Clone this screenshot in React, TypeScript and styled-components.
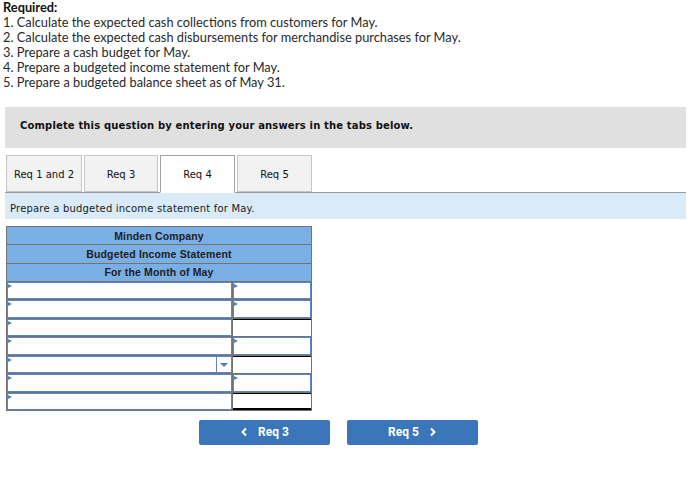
import React from 'react';
import styled, { createGlobalStyle } from 'styled-components';

const GlobalStyle = createGlobalStyle`
  html, body {
    margin: 0;
    padding: 0;
    background: #fff;
  }
  * {
    box-sizing: border-box;
  }
`;

const Page = styled.div`
  width: 696px;
  height: 480px;
  overflow: hidden;
  background: #fff;
`;

const Required = styled.div`
  padding: 0 0 0 3px;
  font-family: Lato, 'Liberation Sans', sans-serif;
  font-size: 12.8px;
  line-height: 15px;
  color: #2a2a2a;

  strong {
    font-weight: 700;
    color: #111;
  }
`;

const Content = styled.div`
  margin: 17px 10px 0 5px;
`;

const Notice = styled.div`
  height: 41px;
  background: #e0e0e0;
  display: flex;
  align-items: center;
  padding: 0 0 4px 15px;
  font-family: 'DejaVu Sans', Verdana, sans-serif;
  font-weight: 700;
  font-size: 10px;
  letter-spacing: 0.15px;
  color: #111;
`;

const TabRow = styled.div`
  margin-top: 7px;
  display: flex;
  gap: 2px;
  padding-left: 1px;
  border-bottom: 1px solid #9a9a9a;
  height: 38px;
`;

const Tab = styled.div<{ $active?: boolean; $w: number }>`
  width: ${p => p.$w}px;
  height: ${p => (p.$active ? '38px' : '37px')};
  display: flex;
  align-items: center;
  justify-content: center;
  padding-top: 1px;
  background: ${p => (p.$active ? '#fff' : '#f2f2f2')};
  border: 1px solid ${p => (p.$active ? '#a3a3a3' : '#c6c6c6')};
  border-bottom: 1px solid ${p => (p.$active ? '#fff' : '#c6c6c6')};
  margin-bottom: ${p => (p.$active ? '-1px' : '0')};
  font-family: 'DejaVu Sans', Verdana, sans-serif;
  font-size: 10px;
  color: #111;
`;

const Instruction = styled.div`
  height: 26px;
  background: #d9ebf8;
  display: flex;
  align-items: center;
  padding: 4px 0 0 5px;
  font-family: 'DejaVu Sans', Verdana, sans-serif;
  font-size: 10px;
  letter-spacing: 0.2px;
  color: #1a1a1a;
`;

const Table = styled.div`
  margin: 7px 0 0 1px;
  width: 306px;
  border: 1.5px solid #747474;
  background: #747474;
`;

const HeadRow = styled.div`
  height: 18.3px;
  background: #7aafe5;
  display: flex;
  align-items: center;
  justify-content: center;
  font-family: 'Liberation Sans', Arial, sans-serif;
  font-weight: 700;
  font-size: 10.5px;
  letter-spacing: 0.15px;
  color: #1d1d1d;
  border-bottom: 1.5px solid #747474;
`;

const BodyRow = styled.div`
  display: grid;
  grid-template-columns: 224.5px 1fr;
  column-gap: 1.5px;
  height: 18.5px;
  border-bottom: 1.5px solid #747474;

  &:last-child {
    border-bottom: none;
    height: 17px;
  }
`;

const Cell = styled.div<{ $rule?: 'top' | 'total' }>`
  background: #fff;
  border-top: ${p => (p.$rule ? '1px solid #000' : 'none')};
  border-bottom: ${p => (p.$rule === 'total' ? '2px solid #000' : 'none')};
`;

const Input = styled.div`
  height: 100%;
  border: 1px solid #5a87c4;
  background: #fff;
  position: relative;
  display: flex;
  justify-content: flex-end;

  &::before {
    content: '';
    position: absolute;
    left: 0;
    top: 1px;
    border-left: 4px solid #4a7fc4;
    border-top: 2.5px solid transparent;
    border-bottom: 2.5px solid transparent;
  }
`;

const SelectButton = styled.div`
  width: 15px;
  border-left: 1px solid #5a87c4;
  display: flex;
  align-items: center;
  justify-content: center;

  &::after {
    content: '';
    border-top: 4px solid #4a7fc4;
    border-left: 4px solid transparent;
    border-right: 4px solid transparent;
    margin-top: 1px;
  }
`;

const Nav = styled.div`
  margin-top: 9px;
  display: flex;
  justify-content: center;
  gap: 17px;
  padding-right: 14px;
`;

const NavButton = styled.button`
  width: 131px;
  height: 25px;
  border: none;
  border-radius: 2px;
  background: #3a76b9;
  color: #fff;
  display: flex;
  align-items: center;
  justify-content: center;
  gap: 10px;
  font-family: Roboto, 'Liberation Sans', sans-serif;
  font-weight: 700;
  font-size: 12px;
  padding: 0;
  cursor: pointer;
`;

const Chevron = ({ dir }: { dir: 'left' | 'right' }) => (
  <svg width="8" height="10" viewBox="0 0 8 10">
    <polyline
      points={dir === 'left' ? '6,1.5 2.5,5 6,8.5' : '2,1.5 5.5,5 2,8.5'}
      fill="none"
      stroke="#fff"
      strokeWidth="2"
    />
  </svg>
);

type RowSpec = { select?: boolean; right: 'input' | 'top' | 'total' };

const rows: RowSpec[] = [
  { right: 'input' },
  { right: 'input' },
  { right: 'top' },
  { right: 'input' },
  { select: true, right: 'top' },
  { right: 'input' },
  { right: 'total' },
];

const tabs = [
  { label: 'Req 1 and 2', w: 76 },
  { label: 'Req 3', w: 74 },
  { label: 'Req 4', w: 75, active: true },
  { label: 'Req 5', w: 75 },
];

export default function App() {
  return (
    <Page>
      <GlobalStyle />
      <Required>
        <strong>Required:</strong>
        <div>1. Calculate the expected cash collections from customers for May.</div>
        <div>2. Calculate the expected cash disbursements for merchandise purchases for May.</div>
        <div>3. Prepare a cash budget for May.</div>
        <div>4. Prepare a budgeted income statement for May.</div>
        <div>5. Prepare a budgeted balance sheet as of May 31.</div>
      </Required>
      <Content>
        <Notice>Complete this question by entering your answers in the tabs below.</Notice>
        <TabRow>
          {tabs.map(t => (
            <Tab key={t.label} $w={t.w} $active={t.active}>
              {t.label}
            </Tab>
          ))}
        </TabRow>
        <Instruction>Prepare a budgeted income statement for May.</Instruction>
        <Table>
          <HeadRow>Minden Company</HeadRow>
          <HeadRow>Budgeted Income Statement</HeadRow>
          <HeadRow>For the Month of May</HeadRow>
          {rows.map((r, i) => (
            <BodyRow key={i}>
              <Cell>
                <Input>{r.select && <SelectButton />}</Input>
              </Cell>
              {r.right === 'input' ? (
                <Cell>
                  <Input />
                </Cell>
              ) : (
                <Cell $rule={r.right} />
              )}
            </BodyRow>
          ))}
        </Table>
        <Nav>
          <NavButton>
            <Chevron dir="left" />
            Req 3
          </NavButton>
          <NavButton>
            Req 5
            <Chevron dir="right" />
          </NavButton>
        </Nav>
      </Content>
    </Page>
  );
}
